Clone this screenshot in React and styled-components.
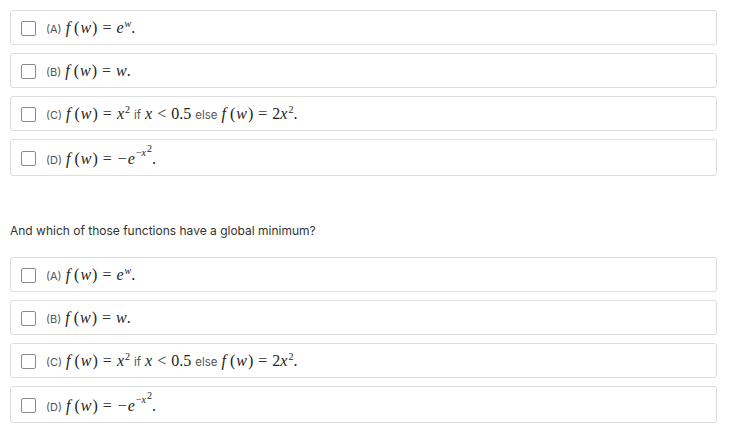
import React from 'react';
import styled, { createGlobalStyle } from 'styled-components';

const GlobalStyle = createGlobalStyle`
  body {
    margin: 0;
    background: #fff;
    font-family: Inter, "Noto Sans", sans-serif;
  }
`;

const Page = styled.div`
  width: 707px;
  padding: 10px 16px 10px 10px;
`;

const Options = styled.div`
  display: flex;
  flex-direction: column;
  gap: 8px;
`;

const Option = styled.label`
  display: flex;
  align-items: center;
  gap: 10px;
  min-height: ${p => (p.$tall ? 34 : 32)}px;
  padding: 1px 10px 0 10px;
  border: 1px solid #dddddd;
  border-radius: 3px;
  background: #fff;
`;

const Box = styled.span`
  flex: none;
  width: 13px;
  height: 13px;
  border: 1px solid #8a8a8a;
  border-radius: 2px;
  background: #fff;
`;

const Label = styled.span`
  display: flex;
  align-items: baseline;
  gap: 4px;
  color: #555;
  font-size: 11px;
`;

const Math = styled.span`
  font-family: "Liberation Serif", "DejaVu Serif", serif;
  font-size: 16px;
  color: #222;
  white-space: nowrap;
`;

const I = styled.i`
  font-style: italic;
  margin: ${p => p.$m || '0'};
`;

const Op = styled.span`
  margin: 0 ${p => p.$space || 5}px;
  color: #333;
`;

const Sup = styled.sup`
  font-size: 10px;
  vertical-align: ${p => p.$raise || '6px'};
  line-height: 0;
  margin-left: 1px;
`;

const Plain = styled.span`
  font-family: Inter, "Noto Sans", sans-serif;
  font-size: 11.5px;
  color: #555;
  margin: 0 4px;
`;

const Question = styled.p`
  margin: 47px 0 19px 0;
  font-size: 12px;
  color: #333;
`;

const Fw = () => (
  <>
    <I $m="0 4px 0 0">f</I>(<I $m="0 1px">w</I>)<Op>=</Op>
  </>
);

const items = [
  {
    key: 'A',
    math: (
      <>
        <Fw /><I>e</I><Sup><I>w</I></Sup>.
      </>
    ),
  },
  {
    key: 'B',
    math: (
      <>
        <Fw /><I>w</I>.
      </>
    ),
  },
  {
    key: 'C',
    math: (
      <>
        <Fw /><I>x</I><Sup>2</Sup>
        <Plain>if</Plain>
        <I>x</I><Op>&lt;</Op>0.5
        <Plain>else</Plain>
        <Fw />2<I>x</I><Sup>2</Sup>.
      </>
    ),
  },
  {
    key: 'D',
    tall: true,
    math: (
      <>
        <Fw /><Op $space={1}>−</Op><I>e</I>
        <Sup $raise="8px">−<I>x</I><Sup $raise="4px">2</Sup></Sup>.
      </>
    ),
  },
];

const OptionList = () => (
  <Options>
    {items.map(it => (
      <Option key={it.key} $tall={it.tall}>
        <Box />
        <Label>
          ({it.key})<Math>{it.math}</Math>
        </Label>
      </Option>
    ))}
  </Options>
);

export default function App() {
  return (
    <>
      <GlobalStyle />
      <Page>
        <OptionList />
        <Question>And which of those functions have a global minimum?</Question>
        <OptionList />
      </Page>
    </>
  );
}
